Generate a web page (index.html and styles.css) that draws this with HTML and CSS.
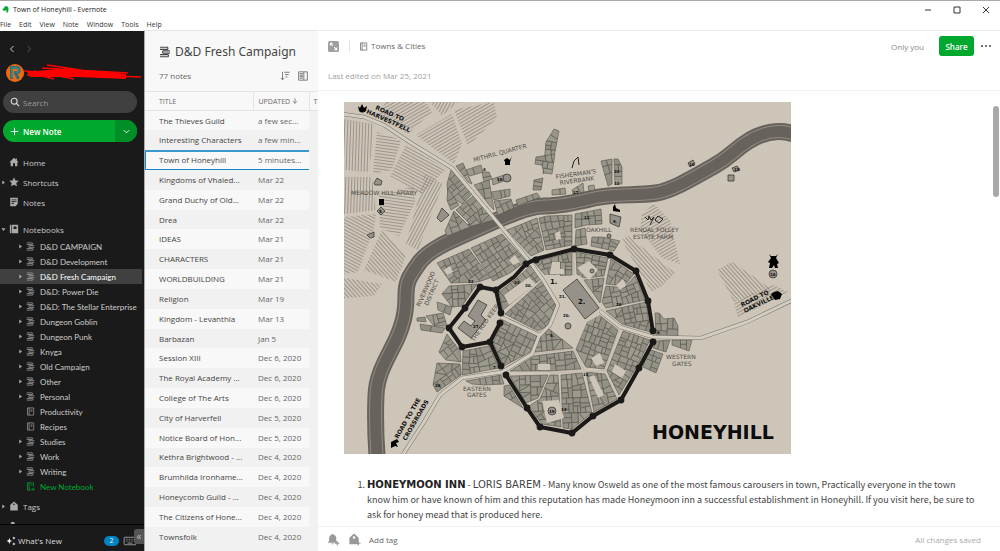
FILE: index.html
```html
<!doctype html>
<html lang="en">

<head>
	<meta charset="UTF-8" />
	<meta name="viewport" content="width=device-width, initial-scale=1.0" />
	<title>Town of Honeyhill - Evernote</title>
	<link rel="stylesheet" href="styles.css">
</head>

<body>
	<svg class="sprite" width="0" height="0">
		<symbol id="i-stack" viewBox="0 0 12 12">
			<path d="M1 1.200h7.500q1 1.100 0 2.200H1M11 4.900H4q-1 1.100 0 2.200h7M1 8.600h8q1 1.100 0 2.200H1" fill="none" stroke="currentColor" stroke-width="1.100" />
		</symbol>
		<symbol id="i-book" viewBox="0 0 12 12">
			<path d="M2 1.2h8.3v9.6H2zM4.2 1.2v9.6M6 4h2.6M6 5.6h2.6" fill="none" stroke="currentColor" stroke-width="1" />
		</symbol>
		<symbol id="i-right" viewBox="0 0 6 6">
			<path d="M1.5 .5L4.8 3 1.5 5.5z" fill="currentColor" />
		</symbol>
	</svg>

	<header class="titlebar">
		<div class="window-title">
			<svg class="logo" viewBox="0 0 12 12"><path d="M4.2.8C6 .2 9.8 1 10.6 2.2c.8 2 .6 5.6-.2 8-.5 1.3-3 1.3-3.2-.1-.1-1 .5-1.4 1.5-1.3-.6-1-1.6-.8-2.3-1.5C5.6 8.400 3.600 8.600 2.400 7.800 1.300 7 .8 5.300 1 4.200h2.700z" fill="#00a82d" /></svg>
			<span>Town of Honeyhill - Evernote</span>
		</div>
		<div class="window-buttons">
			<button aria-label="Minimize"><svg viewBox="0 0 8 8"><path d="M1 4h6" /></svg></button>
			<button aria-label="Maximize"><svg viewBox="0 0 8 8"><path d="M1 1h6v6H1z" /></svg></button>
			<button aria-label="Close"><svg viewBox="0 0 8 8"><path d="M1 1l6 6M7 1L1 7" /></svg></button>
		</div>
	</header>
	<nav class="menubar">
		<button>File</button>
		<button>Edit</button>
		<button>View</button>
		<button>Note</button>
		<button>Window</button>
		<button>Tools</button>
		<button>Help</button>
	</nav>

	<div class="app">
		<aside class="sidebar">
			<div class="history">
				<button aria-label="Back"><svg viewBox="0 0 8 8"><path d="M5.500 1L2.500 4l3 3" /></svg></button>
				<button aria-label="Forward" class="off"><svg viewBox="0 0 8 8"><path d="M2.500 1l3 3-3 3" /></svg></button>
			</div>
			<div class="account">
				<svg class="avatar" viewBox="0 0 18 18">
					<circle cx="9" cy="9" r="9" fill="#ee6a12" />
					<path d="M5.500 15V3.500h5c3.500 0 3.500 5 0 5.300H8M9.500 9l3 6" fill="none" stroke="#2f6f74" stroke-width="3" />
					<path d="M6 14V4h4.500c2.500 0 2.500 4 0 4.300" fill="none" stroke="#5b9a96" stroke-width=".8" />
				</svg>
				<svg class="scribble" viewBox="0 0 120 18">
					<path d="M0 7l60 4M3 11l60 0M23 1l40 6M18 4l86 5M5 9l112 4M30 15l-20-5 88 3M10 7l40 8" fill="none" stroke="#f00" stroke-width="1.500" />
					<path d="M3 8l30-3 40 2 29 3v5l-50-2-46 0z" fill="#f00" />
				</svg>
			</div>
			<label class="search">
				<svg viewBox="0 0 12 12"><circle cx="5" cy="5" r="3.600" /><path d="M7.700 7.700l3.300 3.300" /></svg>
				<input type="text" placeholder="Search" aria-label="Search">
			</label>
			<div class="new-note">
				<button class="new-main"><svg viewBox="0 0 10 10"><path d="M5 .8v8.400M.8 5h8.400" /></svg>New Note</button>
				<button class="new-more" aria-label="More note types"><svg viewBox="0 0 10 10"><path d="M2 3.500l3 3 3-3" /></svg></button>
			</div>

			<div class="nav-scroll">
				<ul class="nav-main">
					<li><span class="arrow"></span><a href="#"><svg viewBox="0 0 12 12"><path d="M6 .8L.5 6.200h1.500V11h2.800V7.500h2.400V11H10V6.200h1.500L9.500 4.200V1.800H8.200v1.100z" /></svg>Home</a></li>
					<li><svg class="arrow"><use href="#i-right" /></svg><a href="#"><svg viewBox="0 0 12 12"><path d="M6 .4l1.700 3.700 4 .4-3 2.700.9 4L6 9.200l-3.600 2 .9-4-3-2.700 4-.4z" /></svg>Shortcuts</a></li>
					<li><span class="arrow"></span><a href="#"><svg viewBox="0 0 12 12"><path fill-rule="evenodd" d="M1.500 1h9v7L8 11H1.500zM3 3v1h6V3zM3 5v1h6V5zM3 7v1h3V7z" /></svg>Notes</a></li>
				</ul>
				<ul class="nav-main books">
					<li><svg class="arrow down"><use href="#i-right" /></svg><a href="#"><svg viewBox="0 0 12 12"><path fill-rule="evenodd" d="M1 1h1.500v10H1zM3.200 1H11v10H3.200zM5.500 3v3H9V3z" /></svg>Notebooks</a></li>
				</ul>
				<ul class="tree">
					<li><svg class="arrow"><use href="#i-right" /></svg><a href="#"><svg><use href="#i-stack" /></svg>D&amp;D CAMPAIGN</a></li>
					<li><svg class="arrow"><use href="#i-right" /></svg><a href="#"><svg><use href="#i-stack" /></svg>D&amp;D Development</a></li>
					<li class="active"><svg class="arrow"><use href="#i-right" /></svg><a href="#"><svg><use href="#i-stack" /></svg>D&amp;D Fresh Campaign</a></li>
					<li><svg class="arrow"><use href="#i-right" /></svg><a href="#"><svg><use href="#i-stack" /></svg>D&amp;D: Power Die</a></li>
					<li><svg class="arrow"><use href="#i-right" /></svg><a href="#"><svg><use href="#i-stack" /></svg>D&amp;D: The Stellar Enterprise</a></li>
					<li><svg class="arrow"><use href="#i-right" /></svg><a href="#"><svg><use href="#i-stack" /></svg>Dungeon Goblin</a></li>
					<li><svg class="arrow"><use href="#i-right" /></svg><a href="#"><svg><use href="#i-stack" /></svg>Dungeon Punk</a></li>
					<li><svg class="arrow"><use href="#i-right" /></svg><a href="#"><svg><use href="#i-stack" /></svg>Knyga</a></li>
					<li><svg class="arrow"><use href="#i-right" /></svg><a href="#"><svg><use href="#i-stack" /></svg>Old Campaign</a></li>
					<li><svg class="arrow"><use href="#i-right" /></svg><a href="#"><svg><use href="#i-stack" /></svg>Other</a></li>
					<li><svg class="arrow"><use href="#i-right" /></svg><a href="#"><svg><use href="#i-stack" /></svg>Personal</a></li>
					<li><span class="arrow"></span><a href="#"><svg><use href="#i-book" /></svg>Productivity</a></li>
					<li><span class="arrow"></span><a href="#"><svg><use href="#i-book" /></svg>Recipes</a></li>
					<li><svg class="arrow"><use href="#i-right" /></svg><a href="#"><svg><use href="#i-stack" /></svg>Studies</a></li>
					<li><svg class="arrow"><use href="#i-right" /></svg><a href="#"><svg><use href="#i-stack" /></svg>Work</a></li>
					<li><svg class="arrow"><use href="#i-right" /></svg><a href="#"><svg><use href="#i-stack" /></svg>Writing</a></li>
					<li class="create"><span class="arrow"></span><a href="#"><svg viewBox="0 0 12 12"><path d="M10 6V1.200H2v9.600h5M4.200 1.200v9.600M6 4h2.600M9.500 7.500v4M7.500 9.500h4" fill="none" stroke="currentColor" /></svg>New Notebook</a></li>
				</ul>
				<ul class="nav-main tags">
					<li><svg class="arrow"><use href="#i-right" /></svg><a href="#"><svg viewBox="0 0 12 12"><path fill-rule="evenodd" d="M6 .5l4.500 4V11.500h-9V4.500zM6 3a1 1 0 100 2 1 1 0 000-2z" /></svg>Tags</a></li>
					<li><span class="arrow"></span><a href="#"><svg viewBox="0 0 12 12"><circle cx="4.500" cy="3.500" r="2.500" /><path d="M0 11c0-5 9-5 9 0z" /></svg>Shared with Me</a></li>
				</ul>
			</div>

			<footer class="whats-new">
				<svg class="spark" viewBox="0 0 12 12"><path d="M4 2.500l1 2.500 2.500 1L5 7 4 9.500 3 7 .5 6 3 5zM9.500.5l.6 1.400 1.400.6-1.400.6-.6 1.400-.6-1.400-1.400-.6 1.400-.6zM9.500 7.500l.6 1.400 1.400.6-1.400.6-.6 1.400-.6-1.400-1.400-.6 1.400-.6z" /></svg>
				<a href="#">What's New</a>
				<span class="badge">2</span>
				<svg class="keyboard" viewBox="0 0 16 12"><rect x="1" y="1.500" width="14" height="9" rx="1" /><path d="M3 4h10M3 6h10" stroke-dasharray="1 1" /><path d="M5 8.500h6" /></svg>
			</footer>
			<button class="collapse" aria-label="Collapse sidebar">«</button>
		</aside>

		<section class="notes">
			<header class="notes-head">
				<h1><svg><use href="#i-stack" /></svg>D&amp;D Fresh Campaign</h1>
				<div class="notes-info">
					<span>77 notes</span>
					<button aria-label="Sort"><svg viewBox="0 0 12 12"><path d="M3 1v9.500M.8 8.300L3 10.500l2.200-2.200M5 1.500h6.500M6 4.200h4.500M6.500 7h2.500" /></svg></button>
					<button aria-label="View options"><svg viewBox="0 0 12 12"><path d="M.8 1h10.400v10H.8zM7 1v10M2 3.200h4M2 5h4M2 6.800h4M2 8.600h4" /></svg></button>
				</div>
			</header>
			<div class="table-wrap">
				<table>
					<thead>
						<tr>
							<th class="col-title">TITLE</th>
							<th class="col-date">UPDATED <svg viewBox="0 0 8 8"><path d="M4 .5v6.500M1.200 4.300L4 7.100l2.800-2.800" /></svg></th>
							<th class="col-tags">T</th>
						</tr>
					</thead>
					<tbody>
						<tr><td>The Thieves Guild</td><td>a few sec...</td><td></td></tr>
						<tr><td>Interesting Characters</td><td>a few min...</td><td></td></tr>
						<tr class="selected"><td>Town of Honeyhill</td><td>5 minutes...</td><td></td></tr>
						<tr><td>Kingdoms of Vhaled...</td><td>Mar 22</td><td></td></tr>
						<tr><td>Grand Duchy of Old...</td><td>Mar 22</td><td></td></tr>
						<tr><td>Drea</td><td>Mar 22</td><td></td></tr>
						<tr><td>IDEAS</td><td>Mar 21</td><td></td></tr>
						<tr><td>CHARACTERS</td><td>Mar 21</td><td></td></tr>
						<tr><td>WORLDBUILDING</td><td>Mar 21</td><td></td></tr>
						<tr><td>Religion</td><td>Mar 19</td><td></td></tr>
						<tr><td>Kingdom - Levanthia</td><td>Mar 13</td><td></td></tr>
						<tr><td>Barbazan</td><td>Jan 5</td><td></td></tr>
						<tr><td>Session XIII</td><td>Dec 6, 2020</td><td></td></tr>
						<tr><td>The Royal Academy ...</td><td>Dec 6, 2020</td><td></td></tr>
						<tr><td>College of The Arts</td><td>Dec 6, 2020</td><td></td></tr>
						<tr><td>City of Harverfell</td><td>Dec 5, 2020</td><td></td></tr>
						<tr><td>Notice Board of Hon...</td><td>Dec 5, 2020</td><td></td></tr>
						<tr><td>Kethra Brightwood - ...</td><td>Dec 4, 2020</td><td></td></tr>
						<tr><td>Brumhilda Ironhame...</td><td>Dec 4, 2020</td><td></td></tr>
						<tr><td>Honeycomb Guild - ...</td><td>Dec 4, 2020</td><td></td></tr>
						<tr><td>The Citizens of Hone...</td><td>Dec 4, 2020</td><td></td></tr>
						<tr><td>Townsfolk</td><td>Dec 4, 2020</td><td></td></tr>
					</tbody>
				</table>
			</div>
		</section>

		<main class="note">
			<header class="note-head">
				<div class="note-bar">
					<button class="expand" aria-label="Expand note"><svg viewBox="0 0 12 12"><rect width="12" height="12" rx="2" fill="#a0a0a0" /><path d="M2.500 5V2.500H5M2.500 2.500L5.300 5.300M7 9.500h2.500V7M9.500 9.500L6.700 6.700" fill="none" stroke="#fff" stroke-width="1.100" /></svg></button>
					<a class="notebook" href="#"><svg><use href="#i-book" /></svg>Towns &amp; Cities</a>
					<span class="privacy">Only you</span>
					<button class="share">Share</button>
					<button class="more" aria-label="More actions"><svg viewBox="0 0 12 4"><circle cx="2" cy="2" r="1.100" /><circle cx="6" cy="2" r="1.100" /><circle cx="10" cy="2" r="1.100" /></svg></button>
				</div>
				<p class="edited">Last edited on Mar 25, 2021</p>
			</header>
			<article class="note-body">
				<svg class="map" viewBox="0 0 447 352" role="img" aria-label="Map of Honeyhill">
					<defs>
						<pattern id="hatch" width="3" height="3" patternUnits="userSpaceOnUse"><path d="M0 1.500h3" stroke="#8f887c" stroke-width=".8" /></pattern>
						<pattern id="hatch-a" href="#hatch" patternTransform="rotate(-30)" />
						<pattern id="hatch-b" href="#hatch" patternTransform="rotate(28)" />
						<pattern id="hatch-c" href="#hatch" patternTransform="rotate(92)" />
						<pattern id="hatch-d" href="#hatch" patternTransform="rotate(-62)" />
						<pattern id="hatch-e" href="#hatch" patternTransform="rotate(8)" />
						<pattern id="hatch-f" href="#hatch" patternTransform="rotate(48)" />
						<path id="river" d="M450 32C435 27 418 30 403 40C390 48 388 54 370 64S330 88 312 91S270 91 250 96S216 104 200 104S160 115 133 127S85 147 75 161S62 180 62 193S61 218 53 236S33 270 32 293S31 325 33 353" />
					</defs>
					<rect width="447" height="352" fill="#cdc5b8" />
					<g class="fields">
						<path fill="url(#hatch-a)" d="M42 0H82L88 10 64 32 32 14zM72 33L108 12 118 42 110 62zM110 8L150 0 153 16 124 44z" />
						<path fill="url(#hatch-d)" d="M86 0H114L98 14zM81 72L99 82 74 148 62 142z" />
						<path fill="url(#hatch-c)" d="M0 17L30 22 25 70 0 68zM0 75H28L32 108 0 112z" />
						<path fill="url(#hatch-e)" d="M33 30L57 38 48 68 29 72zM35 92L70 84 71 100 55 134 36 126z" />
						<path fill="url(#hatch-b)" d="M62 43L102 67 78 92 46 74zM0 115L32 112 30 126 14 170 0 172z" />
						<path fill="url(#hatch-f)" d="M38 128L62 154 52 180 20 168zM0 176L38 182 30 194 0 196zM278 138L284 134 331 171 318 184 308 190 294 168zM373 168L388 160 412 176 428 188 390 200z" />
						<path fill="url(#hatch-a)" d="M298 112L310 102 326 118 336 162 318 156 296 128zM390 200L430 183 444 190 394 216z" />
					</g>

					<use href="#river" class="river-bank" />
					<use href="#river" class="river-line" />
					<use href="#river" class="river-water" />

					<g id="houses"></g>

					<path class="plaza" d="M198 173L216 173 221 186 242 216 256 208 258 212 243 220 232 246 216 235 206 226 214 204z" />
					<path class="plaza" d="M153 191L158 210 157 224 145 239 120 243 107 226 122 206 137 187z" />
					<path class="plaza" d="M160 193L185 175 192 182 165 203zM198 299L215 298 220 316 203 321zM233 166L245 159 254 168 245 178z" />
					<path class="plaza" d="M247 256L256 251 260 261 252 264zM271 262L282 269 278 276 268 270zM245 275L250 273 260 293 254 296zM194 262H206V268H194zM211 131L216 129 217 137 212 138zM208 160H216V167H220V172H206zM165 158L171 153 176 160 169 163zM100 168L106 164 109 170 103 173zM272 183L279 177 282 183 276 188z" />
					<g class="lane">
						<path d="M-2 12L20 15 40 23 67 41 108 66 160 128 186 160 199 178 214 203 206 223 195 234 188 252 158 270 118 276 96 293 80 320 58 354" />
						<path d="M157 215L195 233M256 209L276 225 309 235 357 236 403 220 449 198" />
					</g>
					<g class="lane-fill">
						<path d="M-2 12L20 15 40 23 67 41 108 66 160 128 186 160 199 178 214 203 206 223 195 234 188 252 158 270 118 276 96 293 80 320 58 354" />
						<path d="M157 215L195 233M256 209L276 225 309 235 357 236 403 220 449 198" />
					</g>
					<path class="alley" d="M276 226L261 269 205 271M190 252L230 247 240 268M230 148V174M236 173L257 209" />
					<g class="wall">
						<path d="M152 188L170 175 182 162 192 157 230 147 266 153 292 169 304 199 309 230M309 240L295 266 277 298 249 314 228 331 196 325 183 306 162 273M157 264L146 240 118 245 105 226 121 206 136 185 152 188 157 211M156 221L146 240" />
					</g>
					<g id="towers"></g>
					<g class="landmark">
						<path d="M134 198L143 203 137 213 142 218 127 236 114 226 120 219 127 224 131 219 124 214z" />
						<path d="M219 188L233 177 255 206 241 217zM93 116L98 106 105 113 97 120z" />
						<path d="M23 133L30 130 30 135 26 136zM30 81L33 76 38 79 37 83 31 83zM33 109L37 105 41 109 37 113zM344 61L349 58 351 62 346 65zM388 66L393 64 396 68 390 70zM384 73H390V79H384zM266 112L277 115 275 125 266 121z" />
						<circle cx="163" cy="76" r="4" /><circle cx="224" cy="224" r="3" /><circle cx="429" cy="172" r="4" /><circle cx="208" cy="309" r="4" /><circle cx="265" cy="134" r="2" /><circle cx="248" cy="169" r="2" />
					</g>
					<g class="marks">
						<path d="M14 4l2 2 2-4 2 4 3-2-1 5q-4 3-7 0zM158 54l2 4 3-2 3 2 2-4-2 6v3h-5v-3zM35 97h5v6h-5zM425 152l2 2h5l2-2-2 4 3 5-2 1 1 4h-3l-1-3-2 3h-3l1-5-2-1 3-4zM269 109v-4l2-3 1 4 4 2v2zM427 192l3-2 4-1 4 3-2 5-5 1zM47 340l6-3 2 3-3 1 2 4-3-1-4 2z" />
						<path d="M301 115l3 3 1-4 2 4 3-3-4 8M311 118l3-4 5 3-4 4zM228 66l2-7 4-4 1 8" class="thin" />
					</g>

					<g class="map-names">
						<text transform="translate(130 60) rotate(-15)">MITHRIL QUARTER</text>
						<text x="7" y="93">MEADOW HILL APIARY</text>
						<text transform="translate(212 77) rotate(-8)">FISHERMAN'S</text>
						<text transform="translate(216 83) rotate(-8)">RIVERBANK</text>
						<text x="242" y="130">OAKHILL</text>
						<text x="286" y="130">RENDAL FOLLEY</text>
						<text x="289" y="137">ESTATE FARM</text>
						<text transform="translate(76 205) rotate(-66)">RIVERWOOD</text>
						<text transform="translate(84 204) rotate(-66)">DISTRICT</text>
						<text transform="translate(130 240) rotate(-55)">THE RED KEEP</text>
						<text x="119" y="289">EASTERN</text>
						<text x="123" y="295">GATES</text>
						<text x="322" y="257">WESTERN</text>
						<text x="328" y="264">GATES</text>
					</g>
					<g class="map-roads">
						<text transform="translate(31 7) rotate(24)">ROAD TO</text>
						<text transform="translate(22 11) rotate(24)">HARVESTFELL</text>
						<text transform="translate(54 337) rotate(-60)">ROAD TO THE</text>
						<text transform="translate(62 339) rotate(-60)">CROSSROADS</text>
						<text transform="translate(398 205) rotate(-26)">ROAD TO</text>
						<text transform="translate(401 211) rotate(-26)">OAKVILLE</text>
					</g>
					<g class="map-numbers">
						<text x="234" y="202" class="big">2.</text><text x="206" y="182" class="big">1.</text>
						<text x="181" y="185">30.</text><text x="219" y="215">20.</text><text x="215" y="196">21.</text><text x="206" y="235">8.</text><text x="129" y="226">27.</text><text x="139" y="69">4</text><text x="153" y="79">18</text><text x="170" y="182">24</text><text x="124" y="181">23</text><text x="91" y="285">26</text><text x="149" y="267">7</text><text x="205" y="311">19</text><text x="217" y="309">13</text><text x="239" y="274">14</text><text x="272" y="204">28</text><text x="313" y="232">6</text><text x="269" y="121">9.</text><text x="240" y="117">11.</text><text x="270" y="71">22</text><text x="270" y="83">12</text><text x="229" y="92">17</text><text x="345" y="64">10</text><text x="390" y="69">15</text><text x="426" y="174">16</text><text x="35" y="111">5</text>
					</g>
					<text class="map-title" x="308" y="337">HONEYHILL</text>
				</svg>
				<ol>
					<li><b class="rune">HONEYMOON INN</b> - <span class="rune">LORIS BAREM</span> - Many know Osweld as one of the most famous carousers in town, Practically everyone in the town know him or have known of him and this reputation has made Honeymoon inn a successful establishment in Honeyhill. If you visit here, be sure to ask for honey mead that is produced here.</li>
				</ol>
				<div class="scroll-thumb"></div>
			</article>
			<footer class="note-foot">
				<button aria-label="Add reminder"><svg viewBox="0 0 14 14"><path d="M6 .8a1 1 0 011 1c2 .6 3 2 3 4v2.700l1.500 2H.8l1.500-2V5.800c0-2 .8-3.400 2.700-4a1 1 0 011-1zM4.500 11.200h3.200q-1.600 2-3.200 0z" /><path class="plus" d="M11 8.500v5M8.500 11h5" /></svg></button>
				<button aria-label="Tags"><svg viewBox="0 0 14 14"><path fill-rule="evenodd" d="M6.500.5L11.500 5v7h-10V5zM6.500 3.500a1.300 1.300 0 100 2.600 1.300 1.300 0 000-2.600z" /><path class="plus" d="M11 8.500v5M8.500 11h5" /></svg></button>
				<input class="tag-input" type="text" placeholder="Add tag" aria-label="Add tag">
				<span class="saved">All changes saved</span>
			</footer>
		</main>
	</div>
	<script src="map.js"></script>
</body>

</html>
```

FILE: styles.css
```css
* {
	margin: 0;
	padding: 0;
	box-sizing: border-box;
}

body {
	font-family: "Open Sans", "Noto Sans", sans-serif;
	font-size: 8px;
	color: #444;
	background-color: #fff;
	height: 100vh;
	display: flex;
	flex-direction: column;
	overflow: hidden;
	border-top: 1px solid #a9a9a5;
}

button,
input {
	font: inherit;
	color: inherit;
	border: none;
	background: none;
	outline: none;
}

button {
	cursor: pointer;
}

a {
	color: inherit;
	text-decoration: none;
}

ul {
	list-style: none;
}

svg {
	display: block;
	flex: none;
	width: 10px;
	height: 10px;
}

.sprite {
	position: absolute;
	width: 0;
	height: 0;
}

/* window frame */
.titlebar {
	flex: none;
	display: flex;
	justify-content: space-between;
	align-items: center;
	height: 17px;
	padding-left: 2px;
	font-size: 7px;
	color: #222;
}

.window-title {
	display: flex;
	align-items: center;
	gap: 4px;
}

.logo {
	width: 7px;
	height: 7px;
}

.window-buttons {
	display: flex;
}

.window-buttons button {
	width: 29px;
	display: flex;
	justify-content: center;
}

.window-buttons svg {
	width: 8px;
	height: 8px;
	fill: none;
	stroke: #333;
}

.menubar {
	flex: none;
	display: flex;
	gap: 8px;
	height: 12px;
	font-size: 7px;
	line-height: 13px;
	color: #333;
}

.app {
	flex: 1;
	min-height: 0;
	display: flex;
}

/* sidebar */
.sidebar {
	position: relative;
	flex: none;
	width: 144px;
	display: flex;
	flex-direction: column;
	background-color: #1a1a1a;
	color: #ccc;
	border-top: 1px solid #fff;
}

.history {
	display: flex;
	gap: 9px;
	padding: 14px 0 0 8px;
}

.history svg {
	width: 8px;
	height: 8px;
	fill: none;
	stroke: #ccc;
}

.history .off svg {
	stroke: #555;
}

.account {
	display: flex;
	align-items: center;
	padding: 11px 0 9px 6px;
}

.avatar {
	width: 18px;
	height: 18px;
}

.scribble {
	width: 120px;
	height: 18px;
}

.search {
	display: flex;
	align-items: center;
	gap: 3px;
	height: 22px;
	margin: 0 7px 7px 3px;
	padding-left: 7px;
	border-radius: 11px;
	background-color: #404040;
	font-size: 8px;
}

.search svg {
	fill: none;
	stroke: #ddd;
	stroke-width: 1.3;
}

.search input {
	min-width: 0;
	width: 100%;
}

.search input::placeholder {
	color: #999;
}

.new-note {
	display: flex;
	height: 22px;
	margin: 0 7px 10px 3px;
	border-radius: 11px;
	overflow: hidden;
	background-color: #00a82d;
	color: #fff;
}

.new-note svg {
	width: 9px;
	height: 9px;
	fill: none;
	stroke: #fff;
}

.new-main {
	flex: 1;
	display: flex;
	align-items: center;
	gap: 4px;
	padding-left: 7px;
	font-size: 8px;
	font-weight: 600;
}

.new-more {
	display: flex;
	align-items: center;
	justify-content: center;
	width: 22px;
	background-color: #008f26;
}

.nav-scroll {
	flex: 1;
	min-height: 0;
	overflow: hidden;
	margin-right: 2px;
}

.nav-main li {
	display: flex;
	align-items: center;
	height: 20px;
}

.nav-main a,
.tree a {
	display: flex;
	align-items: center;
	gap: 4px;
	white-space: nowrap;
}

.nav-main a {
	font-size: 8px;
}

.nav-main a svg {
	fill: #aaa;
}

.books {
	margin-top: 7px;
}

.arrow {
	flex: none;
	width: 5px;
	height: 5px;
	margin: 0 3px 0 1px;
	color: #aaa;
}

.arrow.down {
	transform: rotate(90deg);
}

.tree {
	font-family: Lato, "Open Sans", sans-serif;
	font-size: 8px;
}

.tree li {
	display: flex;
	align-items: center;
	height: 15px;
	padding-left: 17px;
}

.tree a {
	gap: 5px;
}

.tree a svg {
	width: 9px;
	height: 9px;
	color: #999;
}

.tree .active {
	background-color: #404040;
	color: #fff;
}

.tree .create,
.tree .create a svg {
	color: #00a82d;
}

.tags {
	margin-top: 2px;
}

.whats-new {
	flex: none;
	display: flex;
	align-items: center;
	height: 27px;
	padding: 5px 7px 0 6px;
	border-top: 1px solid #050505;
	font-size: 8px;
	color: #ddd;
}

.whats-new a {
	flex: 1;
	padding-left: 2px;
}

.spark {
	fill: #fff;
}

.badge {
	width: 15px;
	border-radius: 5px;
	background-color: #0081c2;
	color: #fff;
	font-size: 7px;
	line-height: 10px;
	text-align: center;
}

.keyboard {
	width: 14px;
	margin-left: 4px;
	fill: none;
	stroke: #aaa;
}

.collapse {
	position: absolute;
	right: 0;
	bottom: 7px;
	width: 10px;
	height: 15px;
	border-radius: 3px 0 0 3px;
	background-color: #555;
	color: #bbb;
	font-size: 10px;
	line-height: 13px;
}

/* list of notes */
.notes {
	flex: none;
	width: 174px;
	display: flex;
	flex-direction: column;
	background-color: #f8f8f8;
	border-top: 1px solid #e6e6e6;
	border-left: 1px solid #aaa;
}

.notes-head {
	flex: none;
	height: 60px;
	padding: 12px 10px 0 14px;
}

.notes-head h1 {
	display: flex;
	align-items: center;
	gap: 4px;
	font-family: "Noto Sans", sans-serif;
	font-size: 12px;
	font-weight: 400;
	line-height: 18px;
	white-space: nowrap;
}

.notes-head h1 svg {
	width: 12px;
	height: 12px;
}

.notes-info {
	display: flex;
	align-items: center;
	gap: 8px;
	margin-top: 9px;
	line-height: 12px;
	color: #666;
}

.notes-info span {
	flex: 1;
}

.notes-info svg {
	fill: none;
	stroke: #666;
}

.table-wrap {
	flex: 1;
	min-height: 0;
	padding-bottom: 4px;
	background-color: #f1f1f1;
}

table {
	width: 100%;
	height: 100%;
	table-layout: fixed;
	border-collapse: collapse;
	white-space: nowrap;
}

th {
	height: 19px;
	background-color: #f8f8f8;
	border-top: 1px solid #e4e4e4;
	border-bottom: 1px solid #e4e4e4;
	color: #666;
	font-size: 7px;
	font-weight: 400;
	text-align: left;
}

th svg {
	display: inline-block;
	width: 6px;
	height: 6px;
	fill: none;
	stroke: #666;
}

.col-title {
	width: 108px;
	padding-left: 14px;
}

.col-date {
	width: 56px;
	padding-left: 5px;
	border-left: 1px solid #e4e4e4;
	border-right: 1px solid #e4e4e4;
}

.col-tags {
	padding-left: 4px;
	overflow: hidden;
}

td {
	height: 19px;
	line-height: 12px;
}

td:first-child {
	padding-left: 14px;
}

td:nth-child(2) {
	padding-left: 5px;
	color: #666;
}

tbody tr:nth-child(odd) td:not(:last-child) {
	background-color: #f8f8f8;
}

tbody .selected td:not(:last-child) {
	background-color: #fff;
	box-shadow: inset 0 2px #3a9ad0, inset 0 -1px #1589c8;
}

tbody .selected td:first-child {
	box-shadow: inset 0 2px #3a9ad0, inset 0 -1px #1589c8, inset 1px 0 #1589c8;
}

/* open note */
.note {
	flex: 1;
	min-width: 0;
	display: flex;
	flex-direction: column;
	border-top: 1px solid #ececec;
}

.note-head {
	flex: none;
	height: 60px;
	padding: 5px 8px 0 10px;
	border-bottom: 1px solid #f0f0f0;
}

.note-bar {
	display: flex;
	align-items: center;
	height: 20px;
}

.expand svg {
	width: 11px;
	height: 11px;
}

.notebook {
	display: flex;
	align-items: center;
	gap: 3px;
	margin-left: 10px;
	padding-left: 9px;
	border-left: 1px solid #e4e4e4;
	line-height: 12px;
	color: #666;
}

.notebook svg {
	width: 9px;
	height: 9px;
}

.privacy {
	margin-left: auto;
	color: #888;
}

.share {
	width: 35px;
	height: 20px;
	margin: 0 6px 0 15px;
	border-radius: 3px;
	background-color: #00a82d;
	color: #fff;
	font-weight: 600;
}

.more svg {
	width: 12px;
	height: 4px;
	fill: #555;
}

.edited {
	margin-top: 14px;
	line-height: 12px;
	color: #a0a0a0;
}

.note-body {
	position: relative;
	flex: 1;
	min-height: 0;
	overflow: hidden;
	padding: 11px 25px 0 26px;
}

.scroll-thumb {
	position: absolute;
	top: 15px;
	right: 1px;
	width: 6px;
	height: 91px;
	border-radius: 3px;
	background-color: #a9a9a9;
}

.note-body ol {
	margin-top: 23px;
	padding-left: 23px;
	font-family: "Noto Sans CJK JP", "Noto Sans CJK SC", sans-serif;
	font-size: 9px;
	line-height: 15px;
}

.rune {
	font-family: "DejaVu Sans", sans-serif;
	font-size: 10px;
	line-height: 1;
}

b.rune {
	color: #222;
}

.note-foot {
	flex: none;
	display: flex;
	align-items: center;
	gap: 8px;
	height: 25px;
	padding: 1px 19px 0 9px;
	border-top: 1px solid #f0f0f0;
}

.note-foot svg {
	width: 13px;
	height: 13px;
	fill: #999;
}

.note-foot .plus {
	stroke: #999;
	stroke-width: 1.2;
}

.tag-input {
	width: 80px;
}

.tag-input::placeholder {
	color: #666;
}

.saved {
	margin-left: auto;
	color: #aaa;
}

/* town map */
.map {
	width: 447px;
	max-width: 100%;
	height: auto;
}

.river-bank,
.river-line,
.river-water {
	fill: none;
	stroke: #67625c;
	stroke-width: 17;
}

.river-line {
	stroke: #918b82;
	stroke-width: 13;
}

.river-water {
	stroke-width: 11;
}

.houses {
	stroke: #55524a;
	stroke-width: .6;
}

.plaza {
	fill: #cdc5b8;
}

.lane,
.lane-fill,
.alley {
	fill: none;
	stroke: #77726a;
	stroke-width: 4;
}

.lane-fill {
	stroke: #d3ccc0;
	stroke-width: 3;
}

.alley {
	stroke: #bfb8ab;
	stroke-width: 1;
}

.wall {
	fill: none;
	stroke: #1b1a19;
	stroke-width: 4;
}

.tower {
	fill: #1b1a19;
}

.landmark {
	fill: #96928a;
	stroke: #3a3834;
	stroke-width: .8;
}

.marks .thin {
	fill: none;
	stroke: #222;
}

.map text {
	font-family: "DejaVu Sans", sans-serif;
}

.map-names {
	font-size: 6px;
	fill: #4f4c46;
}

.map-roads {
	font-size: 6px;
	font-weight: 700;
	fill: #111;
}

.map-numbers {
	font-size: 4px;
	font-weight: 700;
	fill: #111;
}

.map-numbers .big {
	font-size: 7px;
}

.map-title {
	font-size: 19px;
	font-weight: 700;
	fill: #0c0c0c;
}
```

FILE: map.js
```js
const SVG_NS = 'http://www.w3.org/2000/svg';

// each block is cut up into single houses
const blocks = [
	// north bank
	[[107, 68], [116, 78], [128, 92], [118, 102], [104, 92], [103, 82]],
	[[129, 94], [150, 118], [128, 124], [112, 108]],
	[[110, 109], [126, 125], [103, 134], [101, 129]],
	[[104, 86], [115, 103], [107, 108], [103, 98]],
	[[112, 64], [119, 61], [128, 82], [124, 80]],
	[[122, 68], [137, 63], [139, 70], [126, 74]],
	[[138, 70], [145, 70], [148, 77], [140, 80]],
	[[130, 83], [145, 78], [150, 108], [146, 104]],
	[[147, 90], [166, 87], [166, 94], [150, 98]],
	[[150, 99], [167, 97], [170, 106], [154, 113]],
	[[148, 77], [160, 73], [160, 79], [149, 83]],
	[[172, 98], [193, 91], [196, 95], [174, 104]],
	[[210, 27], [215, 29], [211, 50], [199, 72], [202, 40]],
	[[192, 55], [211, 52], [208, 72], [200, 71], [198, 63], [191, 62]],
	[[190, 78], [199, 76], [197, 88], [189, 88]],
	[[208, 88], [221, 86], [222, 92], [208, 93]],
	[[228, 88], [239, 81], [240, 90], [229, 92]],
	[[244, 84], [250, 83], [251, 88], [245, 89]],
	[[257, 59], [268, 57], [268, 82], [264, 84]],
	[[270, 57], [274, 57], [278, 65], [278, 82], [271, 82]],
	// between the river and the wall
	[[93, 161], [125, 147], [146, 176], [134, 180], [107, 181]],
	[[127, 146], [158, 132], [182, 159], [166, 171], [149, 179]],
	[[105, 184], [133, 182], [118, 204], [108, 205], [98, 192]],
	[[163, 128], [193, 116], [200, 148], [187, 154]],
	[[195, 116], [203, 114], [228, 113], [228, 143], [202, 148]],
	[[231, 112], [257, 107], [258, 122], [242, 123], [231, 126]],
	[[232, 128], [241, 126], [243, 142], [231, 144]],
	[[248, 135], [258, 135], [276, 139], [270, 149], [247, 144]],
	// inside the walls
	[[155, 190], [172, 177], [186, 164], [197, 177], [159, 208]],
	[[198, 179], [212, 203], [203, 224], [194, 229], [161, 212]],
	[[190, 160], [228, 150], [228, 173], [202, 174]],
	[[232, 150], [264, 156], [260, 174], [240, 176], [233, 172]],
	[[240, 178], [260, 176], [256, 201]],
	[[267, 157], [290, 172], [280, 184], [262, 182]],
	[[262, 184], [280, 186], [291, 174], [301, 198], [262, 206], [258, 200]],
	[[262, 209], [302, 200], [306, 230], [278, 222]],
	[[243, 219], [255, 213], [274, 228], [260, 267], [242, 265], [232, 247]],
	[[279, 229], [306, 238], [293, 264], [275, 293], [263, 269]],
	[[242, 270], [261, 272], [273, 297], [250, 310]],
	[[190, 236], [205, 227], [229, 246], [191, 250]],
	[[190, 254], [229, 249], [237, 267], [206, 269], [166, 269]],
	[[166, 274], [204, 273], [194, 296], [182, 301]],
	[[206, 273], [214, 273], [217, 325], [198, 322], [185, 304], [196, 297]],
	[[217, 273], [238, 271], [248, 311], [228, 327], [219, 326]],
	[[160, 218], [193, 234], [186, 250], [160, 264], [149, 241]],
	// around the keep
	[[119, 249], [145, 244], [155, 266], [118, 273]],
	[[103, 232], [116, 249], [117, 260], [102, 258], [95, 250]],
	[[93, 261], [116, 262], [117, 273], [93, 290], [89, 283]],
	[[82, 214], [99, 211], [103, 224], [90, 224]],
	[[73, 216], [81, 215], [82, 220], [73, 219]],
	[[93, 200], [108, 205], [106, 213], [94, 208]],
	[[76, 222], [101, 226], [98, 231], [77, 228]],
	[[122, 279], [157, 273], [160, 282], [140, 283], [128, 282]],
	[[160, 284], [165, 283], [179, 306], [160, 294]],
	// western gates
	[[311, 211], [315, 211], [320, 217], [330, 216], [334, 224], [334, 234], [312, 233]],
	[[312, 239], [326, 238], [322, 250], [309, 246]],
	[[328, 238], [348, 238], [345, 249], [328, 243]],
	[[304, 247], [319, 252], [312, 271], [299, 265]],
];

const towers = [
	[152, 188], [182, 162], [192, 158], [230, 147], [266, 153], [292, 169], [304, 199],
	[309, 229], [309, 240], [295, 266], [277, 298], [249, 314], [228, 331], [196, 325],
	[183, 306], [162, 273], [157, 264], [146, 240], [118, 245], [105, 226], [121, 206],
	[136, 185], [157, 211], [156, 221],
];

const shades = ['#98958a', '#949186', '#9c998d', '#908d82'];

let seed = 11;
function random() {
	seed = (seed * 16807) % 2147483647;
	return seed / 2147483647;
}

function area(poly) {
	let sum = 0;
	poly.forEach(([x, y], i) => {
		const [nx, ny] = poly[(i + 1) % poly.length];
		sum += x * ny - nx * y;
	});
	return Math.abs(sum / 2);
}

// part of the polygon on one side of the line through p with normal n
function clip(poly, p, n) {
	const side = (q) => (q[0] - p[0]) * n[0] + (q[1] - p[1]) * n[1];
	const out = [];
	poly.forEach((a, i) => {
		const b = poly[(i + 1) % poly.length];
		const da = side(a);
		const db = side(b);
		if (da >= 0) out.push(a);
		if (da * db < 0) {
			const t = da / (da - db);
			out.push([a[0] + (b[0] - a[0]) * t, a[1] + (b[1] - a[1]) * t]);
		}
	});
	return out;
}

function divide(poly, houses) {
	if (area(poly) < 40 + random() * 35) {
		houses.push(poly);
		return;
	}
	let best = null;
	let length = 0;
	poly.forEach((a, i) => {
		const b = poly[(i + 1) % poly.length];
		const d = Math.hypot(b[0] - a[0], b[1] - a[1]);
		if (d > length) {
			length = d;
			best = [a, b];
		}
	});
	const [a, b] = best;
	const t = 0.38 + random() * 0.24;
	const p = [a[0] + (b[0] - a[0]) * t, a[1] + (b[1] - a[1]) * t];
	const n = [b[0] - a[0], b[1] - a[1]];
	divide(clip(poly, p, n), houses);
	divide(clip(poly, p, [-n[0], -n[1]]), houses);
}

const group = document.getElementById('houses');
group.setAttribute('class', 'houses');
blocks.forEach((block) => {
	const houses = [];
	divide(block, houses);
	houses.forEach((house) => {
		const el = document.createElementNS(SVG_NS, 'polygon');
		el.setAttribute('points', house.map((q) => q.map((v) => v.toFixed(1)).join(',')).join(' '));
		el.setAttribute('fill', shades[Math.floor(random() * shades.length)]);
		group.appendChild(el);
	});
});

towers.forEach(([x, y]) => {
	const el = document.createElementNS(SVG_NS, 'circle');
	el.setAttribute('class', 'tower');
	el.setAttribute('cx', x);
	el.setAttribute('cy', y);
	el.setAttribute('r', 3.4);
	document.getElementById('towers').appendChild(el);
});
```
